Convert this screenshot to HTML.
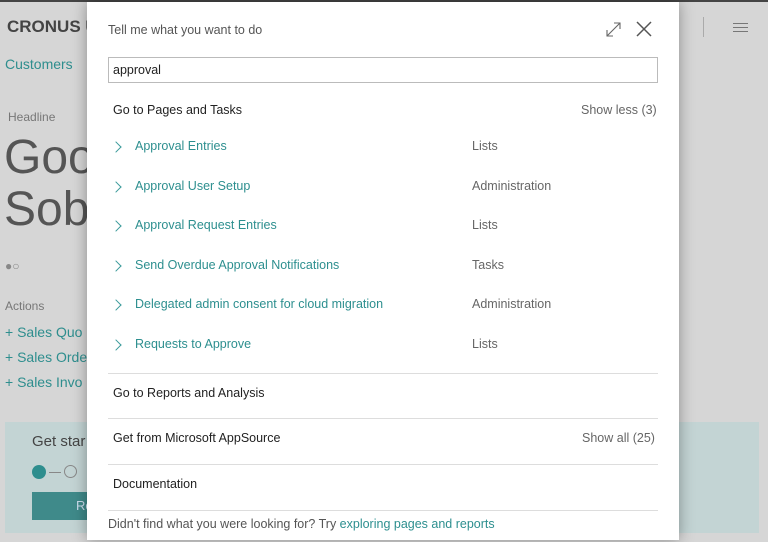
<!DOCTYPE html>
<html><head><style>
body{margin:0;width:768px;height:542px;overflow:hidden;background:#d6d6d6;font-family:"Liberation Sans",sans-serif;position:relative}
.a{position:absolute;white-space:nowrap}
.dlg{position:absolute;left:87px;top:2px;width:592px;height:538px;background:#fff;box-shadow:0 0 14px rgba(0,0,0,.35)}
.dlg .a{font-size:12.5px}
.t{color:#2d8f8f}
.g{color:#666}
.h{color:#222}
.chev{position:absolute;left:25px;width:7px;height:7px;border-right:1.2px solid #3a9a9a;border-top:1.2px solid #3a9a9a;transform:rotate(45deg)}
.hr{position:absolute;left:21px;width:550px;height:1px;background:#ddd}
</style></head><body>
<div style="position:absolute;left:0;top:0;width:768px;height:2px;background:#444"></div>
<div class="a" style="left:7px;top:17px;font-size:17px;font-weight:bold;color:#444">CRONUS U</div>
<div class="a" style="left:5px;top:56px;font-size:14px;color:#2e8e8e">Customers</div>
<div class="a" style="left:8px;top:110px;font-size:12px;color:#777">Headline</div>
<div class="a" style="left:4px;top:132px;font-size:48px;color:#555;font-weight:300;line-height:52px">Goo<br>Sobe</div>
<div class="a" style="left:5px;top:259px;font-size:12px;color:#888">●○</div>
<div class="a" style="left:5px;top:299px;font-size:12px;color:#777">Actions</div>
<div class="a" style="left:5px;top:320px;font-size:14px;color:#2e8e8e;line-height:25px">+ Sales Quo<br>+ Sales Orde<br>+ Sales Invo</div>
<div style="position:absolute;left:5px;top:422px;width:754px;height:111px;background:#c3d4d4"></div>
<div class="a" style="left:32px;top:433px;font-size:15px;color:#444">Get star</div>
<div style="position:absolute;left:32px;top:465px;width:14px;height:14px;border-radius:50%;background:#2e8e8e"></div>
<div style="position:absolute;left:49px;top:472px;width:12px;height:1px;background:#888"></div>
<div style="position:absolute;left:64px;top:465px;width:11px;height:11px;border-radius:50%;border:1.5px solid #888"></div>
<div style="position:absolute;left:32px;top:492px;width:60px;height:28px;background:#3f8a8a;color:#cde;font-size:13px;line-height:28px;text-indent:44px">Re</div>
<div style="position:absolute;left:703px;top:17px;width:1px;height:20px;background:#aaa"></div>
<div style="position:absolute;left:733px;top:23px;width:15px;height:1px;background:#777;box-shadow:0 4px 0 #777,0 8px 0 #777"></div>
<div class="dlg">
<div class="a g" style="left:21px;top:21px;color:#555">Tell me what you want to do</div>
<svg class="a" style="left:518px;top:18px" width="50" height="18"><path d="M2 16L15 3M9 3h6v6M2 10v6h6" stroke="#666" fill="none" stroke-width="1.1"/><path d="M32 2L46 16M46 2L32 16" stroke="#555" stroke-width="1.5"/></svg>
<div style="position:absolute;left:21px;top:55px;width:548px;height:24px;border:1px solid #bbb"></div>
<div class="a" style="left:26px;top:61px;color:#222">approval</div>
<div class="a h" style="left:26px;top:101px">Go to Pages and Tasks</div>
<div class="a g" style="left:494px;top:101px">Show less (3)</div>
<div class="chev" style="top:141px"></div><div class="a t" style="left:48px;top:137px">Approval Entries</div><div class="a g" style="left:385px;top:137px">Lists</div>
<div class="chev" style="top:181px"></div><div class="a t" style="left:48px;top:177px">Approval User Setup</div><div class="a g" style="left:385px;top:177px">Administration</div>
<div class="chev" style="top:220px"></div><div class="a t" style="left:48px;top:216px">Approval Request Entries</div><div class="a g" style="left:385px;top:216px">Lists</div>
<div class="chev" style="top:260px"></div><div class="a t" style="left:48px;top:256px">Send Overdue Approval Notifications</div><div class="a g" style="left:385px;top:256px">Tasks</div>
<div class="chev" style="top:299px"></div><div class="a t" style="left:48px;top:295px">Delegated admin consent for cloud migration</div><div class="a g" style="left:385px;top:295px">Administration</div>
<div class="chev" style="top:339px"></div><div class="a t" style="left:48px;top:335px">Requests to Approve</div><div class="a g" style="left:385px;top:335px">Lists</div>
<div class="hr" style="top:371px"></div>
<div class="a h" style="left:26px;top:384px">Go to Reports and Analysis</div>
<div class="hr" style="top:416px"></div>
<div class="a h" style="left:26px;top:429px">Get from Microsoft AppSource</div>
<div class="a g" style="left:495px;top:429px">Show all (25)</div>
<div class="hr" style="top:462px"></div>
<div class="a h" style="left:26px;top:475px">Documentation</div>
<div class="hr" style="top:508px"></div>
<div class="a" style="left:21px;top:515px;color:#555">Didn't find what you were looking for? Try <span class="t">exploring pages and reports</span></div>
</div>
</body></html>
